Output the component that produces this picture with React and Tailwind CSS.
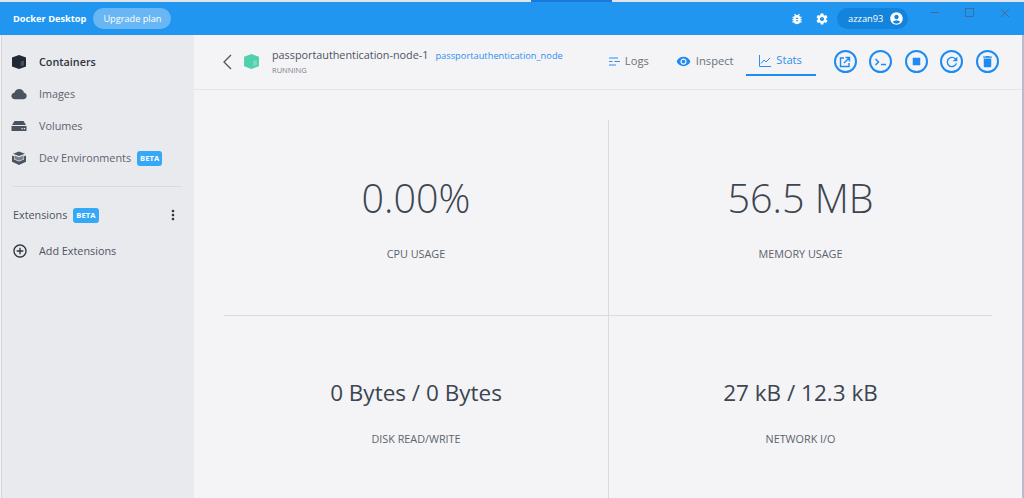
import { MdBugReport, MdSettings, MdAccountCircle, MdRemoveRedEye, MdStop, MdRefresh, MdDelete, MdAddCircleOutline, MdMoreVert } from "react-icons/md";

function CubeIcon({ color = "#1f2833", slat = "#5b636e", size = 16 }) {
  return (
    <svg width={size} height={size} viewBox="0 0 16 16">
      <path d="M8 1l7 2.6v8.8L8 15l-7-2.6V3.6z" fill={color} />
      <path d="M9.5 7.5l3.5-1v5l-3.5 1zM10.6 7.5v4.6M11.8 7.1v4.6" fill={slat} stroke={color} strokeWidth="0.4" />
    </svg>
  );
}

function CloudIcon() {
  return (
    <svg width="16" height="16" viewBox="0 0 16 16">
      <path d="M4 13.2C1.8 13.2.4 11.8.4 10s1.3-3 3-3.200C4 4.700 6 3 8.300 3c2.400 0 4.200 1.600 4.700 3.700 1.500.2 2.700 1.500 2.700 3.200 0 1.900-1.400 3.300-3.300 3.300z" fill="#4b5360" />
    </svg>
  );
}

function VolumeIcon() {
  return (
    <svg width="16" height="16" viewBox="0 0 16 16">
      <path d="M3.500 3h9l2.500 4H1z" fill="#4b5360" />
      <path d="M.5 8h15v5H.5z" fill="#4b5360" />
      <path d="M10.500 10h1.300v1.200h-1.300zM12.800 10h1.300v1.200h-1.300z" fill="#e9eaee" />
    </svg>
  );
}

function DevEnvIcon() {
  return (
    <svg width="16" height="16" viewBox="0 0 16 16">
      <path d="M8 1.500l6 2.300-6 2.300-6-2.300z" fill="#4b5360" />
      <path d="M1 5.500l2 .8v3.200l5 2 5-2V6.300l2-.8v6.300L8 15l-7-3.200z" fill="#4b5360" />
      <path d="M3.500 5.500L8 7.200l4.500-1.700v3.400L8 10.700 3.500 8.900z" fill="#7a818c" />
    </svg>
  );
}

function Beta() {
  return (
    <span className="rounded-[3px] bg-[#35a9f7] px-[3px] text-[7.500px] leading-[15px] font-bold tracking-[0.1px] text-white">
      BETA
    </span>
  );
}

function NavItem({ icon, label, active, beta }) {
  return (
    <div className="flex h-8 items-center pl-[9px]">
      <span className="flex w-[28px] shrink-0">{icon}</span>
      <span className={active ? "text-[10.800px] font-semibold text-[#2d3540]" : "text-[10.800px] text-[#5b636e]"}>
        {label}
      </span>
      {beta && <span className="ml-[6px] flex"><Beta /></span>}
    </div>
  );
}

function Tab({ icon, label, active }) {
  return (
    <div className={active ? "flex h-[28px] w-[70px] items-center justify-center gap-[5px] border-b-2 border-[#1d8bf1] text-[#2e8ef0]" : "flex h-[28px] items-center gap-[5px] text-[#6a717b]"}>
      {icon}
      <span className="text-[11.200px]">{label}</span>
    </div>
  );
}

function RoundBtn({ children }) {
  return (
    <div className="flex h-[23px] w-[23px] items-center justify-center rounded-full border-2 border-[#1d8bf1] text-[#1d8bf1]">
      {children}
    </div>
  );
}

function Stat({ value, label, big }) {
  return (
    <div className="flex flex-col items-center">
      <div className={big ? "mt-[51px] text-[39.500px] leading-[54px] font-light text-[#3d4550]" : "mt-[62px] text-[22.500px] leading-[30px] text-[#3d4550]"}>
        {value}
      </div>
      <div className={big ? "mt-[21px] text-[10.800px] leading-[16px] text-[#5b636e]" : "mt-[23px] text-[10.800px] leading-[16px] text-[#5b636e]"}>
        {label}
      </div>
    </div>
  );
}

export default function App() {
  return (
    <div className="flex h-[498px] w-[1024px] flex-col overflow-hidden bg-[#f4f4f6] font-['Open_Sans',sans-serif]">
      <div className="flex h-[2px] shrink-0 bg-[#e3e3e3]">
        <div className="ml-[531px] w-[81px] bg-[#1a78e0]" />
      </div>
      <header className="flex h-[33px] shrink-0 items-center bg-[#2196f0] pl-[13px] text-white">
        <span className="text-[9.250px] font-bold">Docker Desktop</span>
        <span className="ml-[7px] rounded-full bg-[#69b6f5] px-[10px] text-[9.200px] leading-[21px] text-white">
          Upgrade plan
        </span>
        <div className="ml-auto flex items-center">
          <MdBugReport size={14} />
          <MdSettings size={14} className="ml-[11px]" />
          <div className="ml-[8px] flex h-[21px] w-[71px] items-center gap-[6px] rounded-full bg-[#1383dc] pl-[11px]">
            <span className="text-[9.300px]">azzan93</span>
            <MdAccountCircle size={15} />
          </div>
          <div className="ml-[22px] h-[1px] w-[9px] -translate-y-[6px] bg-[#3b6f9e]" />
          <div className="ml-[26px] h-[9px] w-[9px] -translate-y-[6px] border border-[#3b6f9e]" />
          <svg width="10" height="10" viewBox="0 0 10 10" className="mr-[14px] ml-[26px] -translate-y-[6px]">
            <path d="M1 1l8 8M9 1l-8 8" stroke="#3b6f9e" strokeWidth="1" />
          </svg>
        </div>
      </header>
      <div className="flex min-h-0 flex-1">
        <aside className="ml-[1px] w-[193px] shrink-0 border-l border-[#d4d6dc] bg-[#e9eaee] pt-[11px]">
          <NavItem icon={<CubeIcon />} label="Containers" active />
          <NavItem icon={<CloudIcon />} label="Images" />
          <NavItem icon={<VolumeIcon />} label="Volumes" />
          <NavItem icon={<DevEnvIcon />} label="Dev Environments" beta />
          <div className="mt-[12px] mr-[12px] ml-[11px] border-t border-[#d9dbe0]" />
          <div className="mt-[18px] flex h-[20px] items-center pr-[13px] pl-[11px]">
            <span className="text-[10.800px] text-[#4b5360]">Extensions</span>
            <span className="ml-[6px] flex"><Beta /></span>
            <MdMoreVert size={16} className="ml-auto text-[#2d3540]" />
          </div>
          <div className="mt-[10px] flex h-[32px] items-center pl-[10px]">
            <MdAddCircleOutline size={16} className="mr-[11px] shrink-0 text-[#2d3540]" />
            <span className="text-[10.800px] text-[#4b5360]">Add Extensions</span>
          </div>
        </aside>
        <main className="flex min-w-0 flex-1 flex-col border-r-2 border-[#b9bdc9]">
          <div className="flex h-[55px] shrink-0 items-center border-b border-[#e4e5e8] pb-[1px] pl-[27px]">
            <svg width="12" height="16" viewBox="0 0 12 16" fill="none" stroke="#4b5360" strokeWidth="1.300">
              <path d="M10 1L3 8l7 7" />
            </svg>
            <span className="ml-[10px] flex">
              <CubeIcon color="#4fd1ae" slat="#8ee2cb" size={17} />
            </span>
            <div className="ml-[12px] whitespace-nowrap">
              <div className="flex items-baseline">
                <span className="text-[10.800px] leading-[16px] text-[#4b5360]">passportauthentication-node-1</span>
                <span className="ml-[7px] text-[9.300px] leading-[16px] text-[#2e8ef0]">passportauthentication_node</span>
              </div>
              <div className="text-[7.500px] leading-[12px] text-[#7a818c]">RUNNING</div>
            </div>
            <div className="ml-[46px] flex items-center">
              <Tab label="Logs" icon={
                <svg width="11" height="9" viewBox="0 0 11 9" stroke="#2e8ef0" strokeWidth="1.100">
                  <path d="M0 1h9M0 4.500h3.500M5.500 4.500H11M0 8h7" />
                </svg>
              } />
              <span className="ml-[27px]">
                <Tab label="Inspect" icon={<MdRemoveRedEye size={15} className="text-[#1d8bf1]" />} />
              </span>
              <span className="ml-[12px]">
                <Tab label="Stats" active icon={
                  <svg width="12" height="12" viewBox="0 0 12 12" fill="none" stroke="#2e8ef0" strokeWidth="1">
                    <path d="M.5 0v11.500H12M2 8.500l3-3.500 2 2 4-4" />
                  </svg>
                } />
              </span>
            </div>
            <div className="ml-[18px] flex gap-[12.500px]">
              <RoundBtn>
                <svg width="12" height="12" viewBox="0 0 12 12" fill="none" stroke="currentColor" strokeWidth="1.400">
                  <path d="M5 2H1.500v8.500H10V7M6.500 1.500H10.500V5.500M10.300 1.700L5 7" />
                </svg>
              </RoundBtn>
              <RoundBtn>
                <svg width="13" height="10" viewBox="0 0 13 10" fill="none" stroke="currentColor" strokeWidth="1.500">
                  <path d="M1.500 2l3 3-3 3M7 7.500h5" />
                </svg>
              </RoundBtn>
              <RoundBtn><MdStop size={15} /></RoundBtn>
              <RoundBtn><MdRefresh size={16} /></RoundBtn>
              <RoundBtn><MdDelete size={15} /></RoundBtn>
            </div>
          </div>
          <div className="mx-[30px] mt-[30px] grid flex-1 grid-cols-[385px_1fr] grid-rows-[196px_1fr]">
            <div className="border-r border-b border-[#d9dbde]">
              <Stat big value="0.00%" label="CPU USAGE" />
            </div>
            <div className="border-b border-[#d9dbde]">
              <Stat big value="56.5 MB" label="MEMORY USAGE" />
            </div>
            <div className="border-r border-[#d9dbde]">
              <Stat value="0 Bytes / 0 Bytes" label="DISK READ/WRITE" />
            </div>
            <div>
              <Stat value="27 kB / 12.3 kB" label="NETWORK I/O" />
            </div>
          </div>
        </main>
      </div>
    </div>
  );
}
